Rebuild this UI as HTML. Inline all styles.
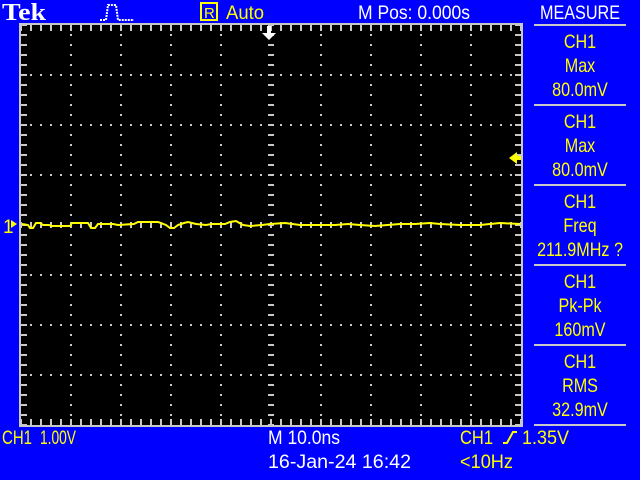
<!DOCTYPE html>
<html><head><meta charset="utf-8"><style>
html,body{margin:0;padding:0;background:#0000ff;width:640px;height:480px;overflow:hidden}
svg{display:block}
</style></head><body>
<svg width="640" height="480" viewBox="0 0 640 480" xmlns="http://www.w3.org/2000/svg" font-family="Liberation Sans, sans-serif" font-size="19">
<rect width="640" height="480" fill="#0000ff"/>
<rect x="20" y="24" width="502" height="402" fill="#000"/>
<g stroke="#c8c8c8" stroke-width="2" stroke-dasharray="2 8" stroke-dashoffset="1">
<line x1="71" y1="25" x2="71" y2="426"/><line x1="121" y1="25" x2="121" y2="426"/><line x1="171" y1="25" x2="171" y2="426"/><line x1="221" y1="25" x2="221" y2="426"/><line x1="321" y1="25" x2="321" y2="426"/><line x1="371" y1="25" x2="371" y2="426"/><line x1="421" y1="25" x2="421" y2="426"/><line x1="471" y1="25" x2="471" y2="426"/>
<line x1="21" y1="75" x2="522" y2="75"/><line x1="21" y1="125" x2="522" y2="125"/><line x1="21" y1="175" x2="522" y2="175"/><line x1="21" y1="275" x2="522" y2="275"/><line x1="21" y1="325" x2="522" y2="325"/><line x1="21" y1="375" x2="522" y2="375"/>
</g>
<g stroke="#c8c8c8" stroke-width="6" stroke-dasharray="2 8" stroke-dashoffset="1">
<line x1="271" y1="25" x2="271" y2="426"/><line x1="21" y1="225" x2="522" y2="225"/>
<line x1="24" y1="25" x2="24" y2="426"/><line x1="518" y1="25" x2="518" y2="426"/>
<line x1="21" y1="28" x2="522" y2="28"/><line x1="21" y1="422" x2="522" y2="422"/>
</g>
<rect x="20" y="24" width="502" height="402" fill="none" stroke="#c8c8c8" stroke-width="2"/>
<polyline fill="none" stroke="#ffff00" stroke-width="2" points="22,224 28,225 30,228 33,228 36,223 40,223 43,225 49,225 52,226 70,226 72,223 88,223 91,228 95,228 98,224 110,224 113,224 118,225 134,224 138,222 148,222 158,222 166,225 170,228 174,228 178,225 184,223 188,222 196,224 206,225 212,224 225,224 230,222 236,221 243,225 250,226 262,225 270,224 285,223 300,225 318,225 335,225 348,224 360,225 375,226 400,224 415,224 430,223 440,224 460,225 480,225 500,223 520,224"/>
<polygon points="262,33 276,33 269,40" fill="#fff"/><rect x="267" y="26" width="4" height="8" fill="#fff"/>
<polygon points="509,158 517,152 517,164" fill="#ffff00"/><rect x="514" y="156" width="7" height="4" fill="#ffff00"/>
<text x="3" y="233" fill="#ffff00" font-size="19">1</text>
<polygon points="11,220 17,224 11,228" fill="#ffff00"/>
<text x="2" y="20" fill="#fff" font-family="Liberation Serif, serif" font-weight="bold" font-size="24" textLength="44" lengthAdjust="spacingAndGlyphs">Tek</text>
<polyline points="100,20 106,20 108,5 116,5 118,20 134,20" fill="none" stroke="#fff" stroke-width="2" stroke-dasharray="2 1"/>
<rect x="201" y="3" width="16" height="17" fill="none" stroke="#ffff00" stroke-width="2"/>
<text x="204" y="18" fill="#ffff00" font-size="15">R</text>
<text x="226" y="19" fill="#ffff00" textLength="38" lengthAdjust="spacingAndGlyphs">Auto</text>
<text x="358" y="19" fill="#fff" textLength="112" lengthAdjust="spacingAndGlyphs">M Pos: 0.000s</text>
<text x="540" y="19" fill="#fff" textLength="80" lengthAdjust="spacingAndGlyphs">MEASURE</text>
<g stroke="#c8c8c8" stroke-width="2">
<line x1="534" y1="25" x2="626" y2="25"/><line x1="534" y1="105" x2="626" y2="105"/><line x1="534" y1="185" x2="626" y2="185"/><line x1="534" y1="265" x2="626" y2="265"/><line x1="534" y1="345" x2="626" y2="345"/><line x1="534" y1="425" x2="626" y2="425"/>
</g>
<g fill="#ffff00" text-anchor="middle" transform="translate(580 0) scale(0.85 1)">
<text x="0" y="48">CH1</text><text x="0" y="72">Max</text><text x="0" y="96">80.0mV</text>
<text x="0" y="128">CH1</text><text x="0" y="152">Max</text><text x="0" y="176">80.0mV</text>
<text x="0" y="208">CH1</text><text x="0" y="232">Freq</text><text x="0" y="256">211.9MHz ?</text>
<text x="0" y="288">CH1</text><text x="0" y="312">Pk-Pk</text><text x="0" y="336">160mV</text>
<text x="0" y="368">CH1</text><text x="0" y="392">RMS</text><text x="0" y="416">32.9mV</text>
</g>
<text x="2" y="444" fill="#ffff00" textLength="30" lengthAdjust="spacingAndGlyphs">CH1</text>
<text x="40" y="444" fill="#ffff00" textLength="36" lengthAdjust="spacingAndGlyphs">1.00V</text>
<text x="268" y="444" fill="#fff" textLength="72" lengthAdjust="spacingAndGlyphs">M 10.0ns</text>
<text x="268" y="468" fill="#fff" textLength="143" lengthAdjust="spacingAndGlyphs">16-Jan-24 16:42</text>
<text x="460" y="444" fill="#ffff00" textLength="33" lengthAdjust="spacingAndGlyphs">CH1</text>
<polyline points="503,443 507,443 513,432 517,432" fill="none" stroke="#ffff00" stroke-width="2"/>
<text x="522" y="444" fill="#ffff00" textLength="47" lengthAdjust="spacingAndGlyphs">1.35V</text>
<text x="460" y="468" fill="#ffff00" textLength="53" lengthAdjust="spacingAndGlyphs">&lt;10Hz</text>
</svg>
</body></html>
